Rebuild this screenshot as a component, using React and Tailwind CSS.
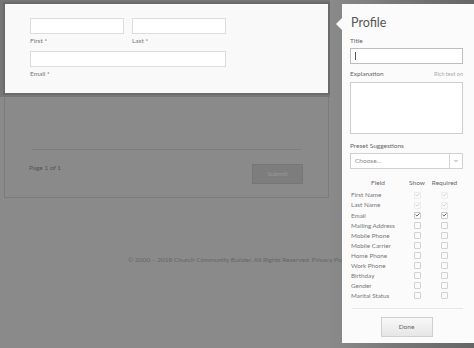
import { Check, ChevronDown } from 'lucide-react';

const fields = [
    { name: 'First Name', show: 'locked', req: 'locked' },
    { name: 'Last Name', show: 'locked', req: 'locked' },
    { name: 'Email', show: 'on', req: 'on' },
    { name: 'Mailing Address' },
    { name: 'Mobile Phone' },
    { name: 'Mobile Carrier' },
    { name: 'Home Phone' },
    { name: 'Work Phone' },
    { name: 'Birthday' },
    { name: 'Gender' },
    { name: 'Marital Status' },
];

const Box = ({ state }) => {
    if (state === 'locked') {
        return (
            <span className="w-[7px] h-[7px] rounded-[1px] border border-[#ececec] flex items-center justify-center text-[#b8b8b8]">
                <Check size={6} strokeWidth={3} />
            </span>
        );
    }
    if (state === 'on') {
        return (
            <span className="w-[7px] h-[7px] rounded-[1px] border border-[#c9c9c9] bg-white flex items-center justify-center text-[#333]">
                <Check size={6} strokeWidth={4} />
            </span>
        );
    }
    return <span className="w-[7px] h-[7px] rounded-[1px] border border-[#d2d2d2] bg-[#fafafa]"></span>;
};

const Label = ({ children }) => (
    <p className="text-[6.5px] leading-[8px] text-[#777] mt-[3px]">
        {children} <span className="text-[#c0392b]">*</span>
    </p>
);

const App = () => {
    return (
        <div className="w-[474px] h-[348px] flex overflow-hidden bg-[#8a8a8a] font-['Lato',sans-serif]">
            {/* Página de fondo con el bloque resaltado */}
            <div className="w-[330px] shrink-0 flex flex-col bg-[#8a8a8a]">
                <div className="bg-[#767676] pt-[2px] pb-[2px] pl-[3px]">
                    <div className="h-[93px] border-[2px] border-[#6a6a6a] bg-[#f9f9f9] pl-[25px] pt-[14px]">
                        <div className="flex gap-[8px]">
                            <div>
                                <div className="w-[94px] h-[16px] bg-white border border-[#dcdcdc]"></div>
                                <Label>First</Label>
                            </div>
                            <div>
                                <div className="w-[94px] h-[16px] bg-white border border-[#dcdcdc]"></div>
                                <Label>Last</Label>
                            </div>
                        </div>
                        <div className="mt-[6px]">
                            <div className="w-[196px] h-[16px] bg-white border border-[#dcdcdc]"></div>
                            <Label>Email</Label>
                        </div>
                    </div>
                </div>
                <div className="h-[101px] ml-[4px] w-[325px] border-x border-b border-[#7b7b7b] flex flex-col">
                    <div className="mt-[52px] mx-[27px] h-px bg-[#7e7e7e]"></div>
                    <div className="flex justify-between items-start mt-[14px] pl-[24px] pr-[25px]">
                        <p className="text-[6.5px] text-[#555] -mt-[1px]">Page 1 of 1</p>
                        <div className="w-[51px] h-[20px] bg-[#7d7d7d] border border-[#777] flex items-center justify-center text-[6.5px] text-[#9a9a9a]">
                            Submit
                        </div>
                    </div>
                </div>
                <p className="mt-[57px] ml-[128px] text-[6.5px] text-[#666] whitespace-nowrap">
                    © 2000 – 2018 Church Community Builder. All Rights Reserved. Privacy Policy
                </p>
            </div>

            {/* Panel lateral */}
            <div className="relative z-10 flex-1 flex bg-gradient-to-r from-transparent via-[#767676] to-[#666] pl-[12px] pt-[4px] pb-[5px]">
                <div className="relative flex-1 bg-[#fbfbfb] pl-[8px] pr-[11px] pt-[11px] flex flex-col">
                    <div className="absolute left-[-6px] top-[14px] w-0 h-0 border-y-[6px] border-y-transparent border-r-[6px] border-r-[#fbfbfb]"></div>
                    <h2 className="text-[12.5px] leading-[16px] text-[#555] pl-[1px]">Profile</h2>
                    <p className="text-[6.5px] leading-[8px] text-[#666] mt-[6px]">Title</p>
                    <div className="mt-[3px] h-[16px] border border-[#bdbdbd] bg-white flex items-center pl-[4px]">
                        <span className="w-px h-[8px] bg-[#555]"></span>
                    </div>
                    <div className="flex justify-between items-end mt-[6px]">
                        <p className="text-[6.5px] leading-[8px] text-[#666]">Explanation</p>
                        <p className="text-[5.5px] leading-[8px] text-[#aaa]">Rich text on</p>
                    </div>
                    <div className="mt-[4px] h-[52px] border border-[#cfcfcf] bg-white"></div>
                    <p className="text-[6.5px] leading-[8px] text-[#666] mt-[8px]">Preset Suggestions</p>
                    <div className="mt-[3px] h-[16px] border border-[#d0d0d0] bg-white flex items-center">
                        <span className="flex-1 pl-[4px] text-[6.5px] text-[#888]">Choose...</span>
                        <span className="w-[13px] h-full border-l border-[#d5d5d5] flex items-center justify-center text-[#888]">
                            <ChevronDown size={6} strokeWidth={3} />
                        </span>
                    </div>
                    <div className="mt-[9px] grid grid-cols-[54px_26px_29px] text-[6.5px] leading-[10px] text-[#666]">
                        <span className="text-center pl-[2px]">Field</span>
                        <span className="text-center">Show</span>
                        <span className="text-center">Required</span>
                    </div>
                    <div className="mt-[2px] flex flex-col">
                        {fields.map((f) => (
                            <div key={f.name} className="grid grid-cols-[54px_26px_29px] h-[10.1px] items-center text-[6.3px] text-[#777]">
                                <span className="pl-[1px] whitespace-nowrap">{f.name}</span>
                                <span className="flex justify-center"><Box state={f.show} /></span>
                                <span className="flex justify-center"><Box state={f.req} /></span>
                            </div>
                        ))}
                    </div>
                    <div className="mt-[7px] ml-[2px] h-px bg-[#e6e6e6]"></div>
                    <div className="flex justify-center mt-[8px]">
                        <button className="w-[52px] h-[20px] border border-[#cfcfcf] bg-gradient-to-b from-[#f8f8f8] to-[#e6e6e6] text-[6.5px] text-[#666]">
                            Done
                        </button>
                    </div>
                </div>
            </div>
        </div>
    );
};

export default App;
